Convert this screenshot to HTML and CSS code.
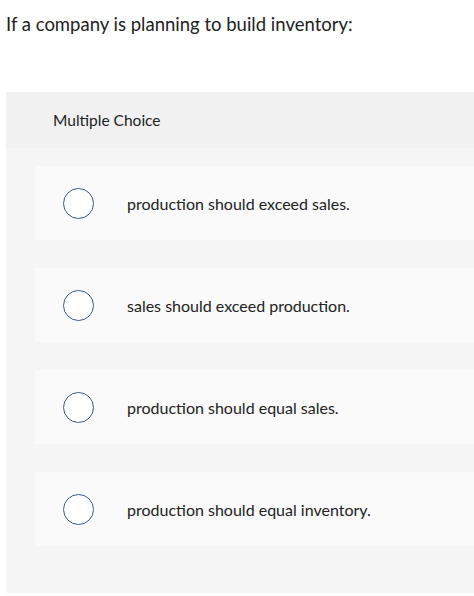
FILE: index.html
```html
<!DOCTYPE html>
<html>
<head>
<meta charset="utf-8">
<link rel="stylesheet" href="styles.css">
</head>
<body>
<h1 class="question">If a company is planning to build inventory:</h1>
<section class="panel">
  <div class="panel-header">Multiple Choice</div>
  <div class="options">
    <label class="option"><span class="radio"></span><span class="option-text">production should exceed sales.</span></label>
    <label class="option"><span class="radio"></span><span class="option-text">sales should exceed production.</span></label>
    <label class="option"><span class="radio"></span><span class="option-text">production should equal sales.</span></label>
    <label class="option"><span class="radio"></span><span class="option-text">production should equal inventory.</span></label>
  </div>
</section>
</body>
</html>
```

FILE: styles.css
```css
html, body {
  margin: 0;
  padding: 0;
  background: #ffffff;
}
body {
  font-family: Lato, "Open Sans", sans-serif;
  color: #222222;
  width: 474px;
  overflow: hidden;
}
.question {
  margin: 0;
  padding: 11px 0 0 6px;
  height: 92px;
  box-sizing: border-box;
  font-size: 18.5px;
  font-weight: 400;
  line-height: 26px;
}
.panel {
  margin-left: 6px;
  background: #f5f5f5;
  height: 501px;
}
.panel-header {
  background: #f1f1f1;
  height: 56px;
  box-sizing: border-box;
  padding: 0 0 0 47px;
  display: flex;
  align-items: center;
  font-size: 15.5px;
}
.options {
  display: flex;
  flex-direction: column;
  gap: 28px;
  padding: 18px 0 0 29px;
}
.option {
  display: flex;
  align-items: center;
  height: 74px;
  background: #fafafa;
  padding-left: 28px;
}
.radio {
  width: 29px;
  height: 29px;
  border: 1.5px solid #3f5a82;
  border-radius: 50%;
  background: #ffffff;
  flex: none;
}
.option-text {
  margin-left: 33px;
  font-size: 16px;
  color: #222222;
}
```
